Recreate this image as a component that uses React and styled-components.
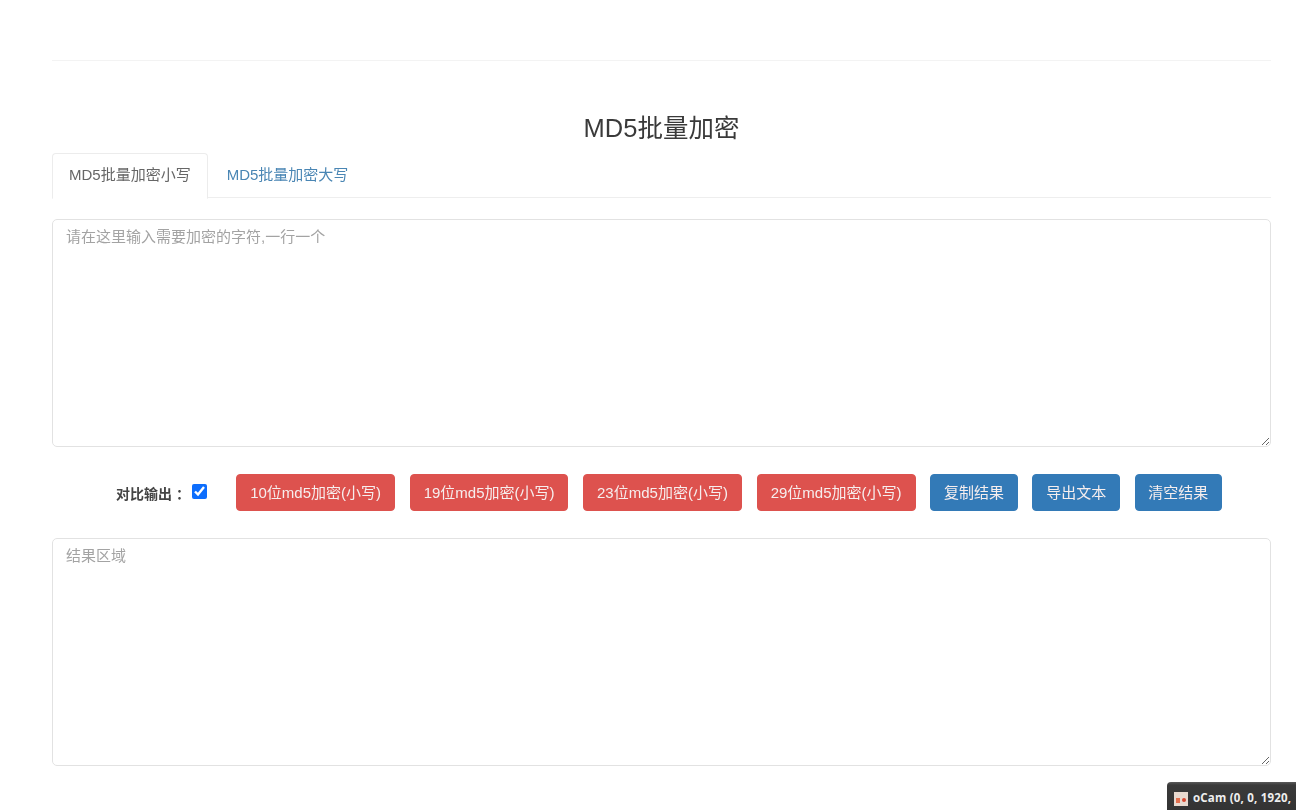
import React from "react";
import styled, { createGlobalStyle } from "styled-components";

const FONT = `"Liberation Sans", "Noto Sans CJK SC", sans-serif`;

const GlobalStyle = createGlobalStyle`
  html, body {
    margin: 0;
    padding: 0;
    background: #fff;
  }
  body {
    font-family: ${FONT};
    font-size: 15px;
    color: #333;
    overflow: hidden;
  }
`;

// the reference is a soft, upscaled capture
const Page = styled.div`
  box-sizing: border-box;
  height: 810px;
  padding: 60px 25px 0 52px;
  filter: blur(0.45px);
`;

const TopRule = styled.hr`
  margin: 0;
  border: 0;
  border-top: 1px solid #f3f3f3;
`;

const Title = styled.h1`
  margin: 0;
  padding-top: 51px;
  height: 41px;
  line-height: 32px;
  text-align: center;
  font-size: 25.5px;
  font-weight: 400;
  color: #3a3a3a;
`;

const Tabs = styled.div`
  display: flex;
  height: 44px;
  border-bottom: 1.5px solid #eee;
`;

const Tab = styled.div`
  box-sizing: border-box;
  height: ${(p) => (p.$active ? "45.5px" : "44px")};
  padding: 0 16px ${(p) => (p.$active ? "5px" : "3px")};
  display: flex;
  align-items: center;
  margin-right: 2px;
  border: 1.5px solid ${(p) => (p.$active ? "#ececec" : "transparent")};
  border-bottom-color: ${(p) => (p.$active ? "#fff" : "transparent")};
  border-radius: 4px 4px 0 0;
  background: ${(p) => (p.$active ? "#fff" : "transparent")};
  color: ${(p) => (p.$active ? "#666" : "#4a86b4")};
  font-size: 15px;
`;

const Area = styled.textarea`
  display: block;
  box-sizing: border-box;
  width: 100%;
  height: 228px;
  margin: ${(p) => p.$top}px 0 0;
  padding: 7px 13px;
  border: 1.5px solid #e2e2e2;
  border-radius: 5px;
  outline: 0;
  font-family: ${FONT};
  font-size: 15px;
  line-height: 20px;
  background: #fff;
  &::placeholder {
    color: #a3a3a3;
    opacity: 1;
  }
`;

const ActionRow = styled.div`
  display: flex;
  align-items: center;
  height: 37px;
  margin-top: 27px;
  padding-left: 64px;
`;

const Label = styled.label`
  display: flex;
  align-items: center;
  font-size: 14px;
  font-weight: 700;
  color: #444;
  margin-right: 29px;
`;

const Check = styled.input`
  width: 15px;
  height: 15px;
  margin: -3px 0 0 2px;
  accent-color: #0d6efd;
`;

const ActionButton = styled.button`
  box-sizing: border-box;
  height: 37px;
  width: ${(p) => p.$w}px;
  margin-right: 14.6px;
  padding: 0 0 2px;
  flex: none;
  border: 1px solid ${(p) => (p.$tone === "danger" ? "#dd524e" : "#337ab7")};
  border-radius: 4px;
  background: ${(p) => (p.$tone === "danger" ? "#dd524e" : "#337ab7")};
  color: #f6eeee;
  font-family: ${FONT};
  font-size: 15px;
`;

const CaptureBadge = styled.div`
  position: absolute;
  right: 0;
  bottom: 0;
  width: 129px;
  height: 28px;
  box-sizing: border-box;
  padding: 2px 0 0 7px;
  display: flex;
  align-items: center;
  gap: 5px;
  overflow: hidden;
  white-space: nowrap;
  border-radius: 4px 0 0 0;
  background: linear-gradient(#5a5a5a 0, #3a3a3a 3px, #333 100%);
  color: #eee;
  font-family: "Open Sans", sans-serif;
  font-size: 11.5px;
  letter-spacing: 0.2px;
  font-weight: 700;
`;

const BadgeIcon = styled.svg`
  flex: none;
  margin-top: 3px;
`;

const hashButtons = [
  { label: "10位md5加密(小写)", w: 159.4 },
  { label: "19位md5加密(小写)", w: 158.5 },
  { label: "23位md5加密(小写)", w: 159 },
  { label: "29位md5加密(小写)", w: 159 },
];

const toolButtons = [
  { label: "复制结果", w: 87.5 },
  { label: "导出文本", w: 88 },
  { label: "清空结果", w: 87 },
];

export default function App() {
  return (
    <>
      <GlobalStyle />
      <Page>
        <TopRule />
        <Title>MD5批量加密</Title>
        <Tabs>
          <Tab $active>MD5批量加密小写</Tab>
          <Tab>MD5批量加密大写</Tab>
        </Tabs>
        <Area $top={21} placeholder="请在这里输入需要加密的字符,一行一个" />
        <ActionRow>
          <Label>
            对比输出 ：
            <Check type="checkbox" defaultChecked />
          </Label>
          {hashButtons.map((b) => (
            <ActionButton key={b.label} $tone="danger" $w={b.w}>
              {b.label}
            </ActionButton>
          ))}
          {toolButtons.map((b) => (
            <ActionButton key={b.label} $tone="primary" $w={b.w}>
              {b.label}
            </ActionButton>
          ))}
        </ActionRow>
        <Area $top={27} placeholder="结果区域" />
      </Page>
      <CaptureBadge>
        <BadgeIcon width="14" height="14" viewBox="0 0 14 14">
          <rect width="14" height="14" fill="#e8d9cf" />
          <rect x="2" y="6" width="4" height="5" fill="#e2704f" />
          <circle cx="10" cy="8" r="2" fill="#d9472f" />
        </BadgeIcon>
        oCam (0, 0, 1920,
      </CaptureBadge>
    </>
  );
}
